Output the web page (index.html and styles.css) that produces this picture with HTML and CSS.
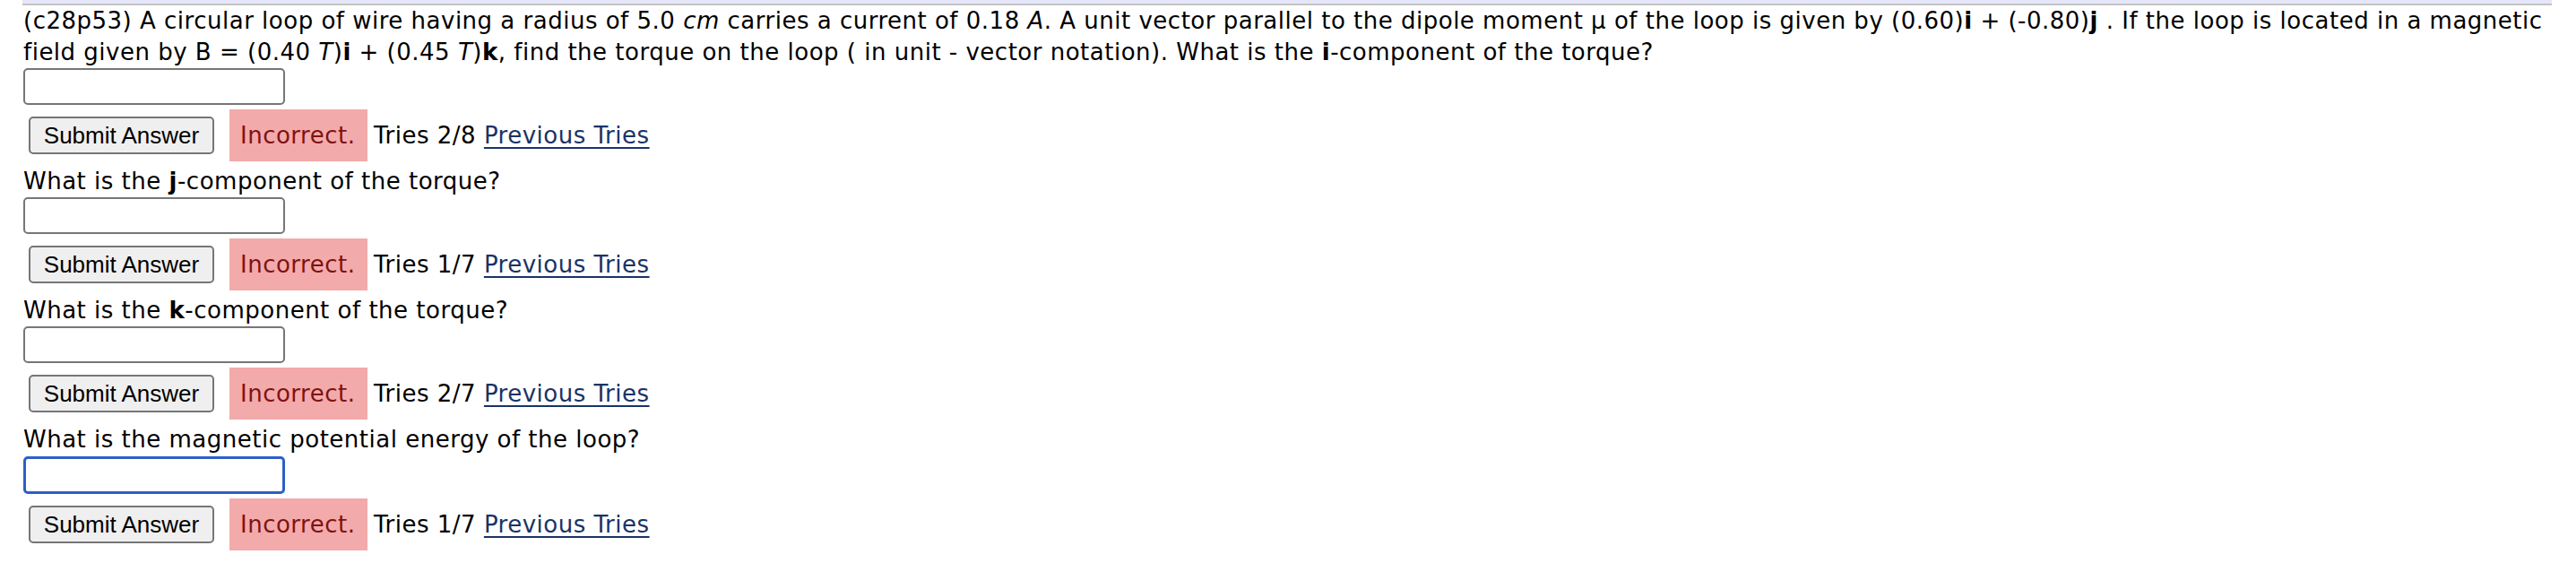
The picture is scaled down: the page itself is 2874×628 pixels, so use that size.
FILE: index.html
```html
<!DOCTYPE html>
<html>
<head>
<meta charset="utf-8">
<link rel="stylesheet" href="styles.css">
</head>
<body>
<div class="band"></div>
<div class="problem">
  <div class="part">
    <p class="q">(c28p53) A circular loop of wire having a radius of 5.0 <i>cm</i> carries a current of 0.18 <i>A</i>. A unit vector parallel to the dipole moment μ of the loop is given by (0.60)<b>i</b> + (-0.80)<b>j</b> . If the loop is located in a magnetic field given by B = (0.40 <i>T</i>)<b>i</b> + (0.45 <i>T</i>)<b>k</b>, find the torque on the loop ( in unit - vector notation). What is the <b>i</b>-component of the torque?</p>
    <input class="ans" type="text">
    <div class="row"><button class="submit">Submit Answer</button><span class="inc">Incorrect.</span><span class="tries">Tries 2/8 <a href="#">Previous Tries</a></span></div>
  </div>
  <div class="part">
    <p class="q">What is the <b>j</b>-component of the torque?</p>
    <input class="ans" type="text">
    <div class="row"><button class="submit">Submit Answer</button><span class="inc">Incorrect.</span><span class="tries">Tries 1/7 <a href="#">Previous Tries</a></span></div>
  </div>
  <div class="part">
    <p class="q">What is the <b>k</b>-component of the torque?</p>
    <input class="ans" type="text">
    <div class="row"><button class="submit">Submit Answer</button><span class="inc">Incorrect.</span><span class="tries">Tries 2/7 <a href="#">Previous Tries</a></span></div>
  </div>
  <div class="part">
    <p class="q">What is the magnetic potential energy of the loop?</p>
    <input class="ans focused" type="text">
    <div class="row"><button class="submit">Submit Answer</button><span class="inc">Incorrect.</span><span class="tries">Tries 1/7 <a href="#">Previous Tries</a></span></div>
  </div>
</div>
</body>
</html>
```
FILE: styles.css
```css
html, body {
  margin: 0;
  padding: 0;
  background: #ffffff;
}
body {
  font-family: "DejaVu Sans", Verdana, sans-serif;
  font-size: 26px;
  line-height: 35px;
  letter-spacing: 0.5px;
  color: #000000;
}
.band {
  margin: 0 27px 0 25px;
  height: 4px;
  background: #e6e6fa;
  border-bottom: 2px solid #c4c4c4;
}
.problem {
  padding: 0 26px 0 26px;
}
.part {
  display: flex;
  flex-direction: column;
  align-items: flex-start;
}
.part + .part {
  margin-top: 5px;
}
.q {
  margin: 0;
}
.ans {
  box-sizing: border-box;
  width: 292px;
  height: 41px;
  margin: 0;
  border: 2px solid #767676;
  border-radius: 5px;
  background: #ffffff;
  font: inherit;
  padding: 0 6px;
}
.ans.focused {
  border: 3px solid #2b60c6;
  height: 42px;
  margin-top: 1px;
}
.row {
  display: flex;
  align-items: center;
  height: 58px;
  margin-top: 5px;
  white-space: nowrap;
}
.submit {
  box-sizing: border-box;
  width: 207px;
  height: 42px;
  margin: 0 0 0 6px;
  padding: 0;
  border: 2px solid #767676;
  border-radius: 5px;
  background: #efefef;
  color: #000000;
  font-family: "Liberation Sans", Arial, sans-serif;
  font-size: 26px;
  letter-spacing: 0;
}
.inc {
  display: inline-block;
  box-sizing: border-box;
  width: 154px;
  height: 58px;
  line-height: 58px;
  margin-left: 17px;
  padding-left: 12px;
  background: #f3aaaa;
  color: #7f1212;
}
.tries {
  margin-left: 7px;
}
.tries a {
  color: #1a3366;
  text-decoration: underline;
  text-underline-offset: 4px;
}
```
